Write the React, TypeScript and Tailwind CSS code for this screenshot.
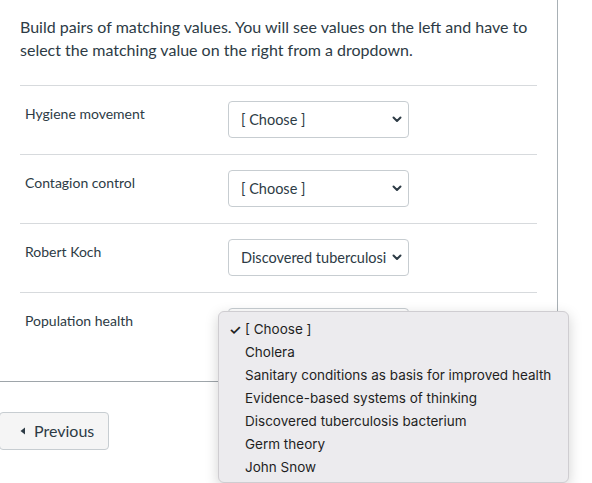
import React from "react";

const rows = [
  { label: "Hygiene movement", value: "[ Choose ]" },
  { label: "Contagion control", value: "[ Choose ]" },
  { label: "Robert Koch", value: "Discovered tuberculosis bacterium" },
  { label: "Population health", value: "[ Choose ]" },
];

const options = [
  "[ Choose ]",
  "Cholera",
  "Sanitary conditions as basis for improved health",
  "Evidence-based systems of thinking",
  "Discovered tuberculosis bacterium",
  "Germ theory",
  "John Snow",
];

function Chevron() {
  return (
    <svg width="10" height="7" viewBox="0 0 10 7" className="shrink-0">
      <path d="M1.5 1.5 L5 5 L8.5 1.5" fill="none" stroke="#2d3b45" strokeWidth="2" strokeLinecap="round" strokeLinejoin="round" />
    </svg>
  );
}

export default function App() {
  return (
    <div className="relative w-[592px] h-[483px] overflow-hidden bg-white font-['Lato','Liberation_Sans',sans-serif] text-[#2d3b45]">
      <div className="w-[558px] h-full border-r border-[#a8b0b5] flex flex-col">
        {/* QUESTION */}
        <div className="px-5 pt-[15px]">
          <p className="text-[16px] leading-[23px]">
            Build pairs of matching values. You will see values on the left and have to select the matching value on the right from a dropdown.
          </p>

          <div className="mt-[24px]">
            {rows.map((r) => (
              <div key={r.label} className="flex h-[69px] border-t border-[#d7dadd]">
                <div className="w-[208px] pl-[5px] pt-[18px] text-[14px] leading-[20px]">{r.label}</div>
                <div className="pt-[15px]">
                  <div className="w-[181px] h-[37px] border border-[#c7cdd1] rounded-[4px] bg-white flex items-center pl-3 pr-[6px] gap-[6px]">
                    <span className="flex-1 text-[14.5px] whitespace-nowrap overflow-hidden">{r.value}</span>
                    <Chevron />
                  </div>
                </div>
              </div>
            ))}
          </div>
        </div>

        {/* FOOTER */}
        <div className="mt-[20px] border-t border-[#9ea5aa] pt-[30px]">
          <button className="ml-[-1px] w-[110px] h-[38px] bg-[#f5f5f5] border border-[#c7cdd1] rounded-[4px] flex items-center pl-[20px] gap-[8px] text-[16px] text-[#2d3b45]">
            <svg width="6" height="8" viewBox="0 0 6 8">
              <path d="M5 0.5 L0.5 4 L5 7.5 Z" fill="#2d3b45" />
            </svg>
            Previous
          </button>
        </div>
      </div>

      {/* OPEN NATIVE DROPDOWN */}
      <div className="absolute left-[218px] top-[311px] w-[351px] h-[172px] bg-[#ecebee] border border-[#cfcdd1] rounded-[6px] shadow-[0_4px_14px_rgba(0,0,0,0.18)] pt-[6px] font-['Inter','Roboto',sans-serif] text-[13.5px] text-[#1f1f1f]">
        {options.map((o, i) => (
          <div key={o} className="flex items-center h-[23px] pl-[10px]">
            <span className="inline-block w-[16px] shrink-0 text-[14px] font-semibold leading-none">{i === 0 ? "✓" : ""}</span>
            <span>{o}</span>
          </div>
        ))}
      </div>
    </div>
  );
}
